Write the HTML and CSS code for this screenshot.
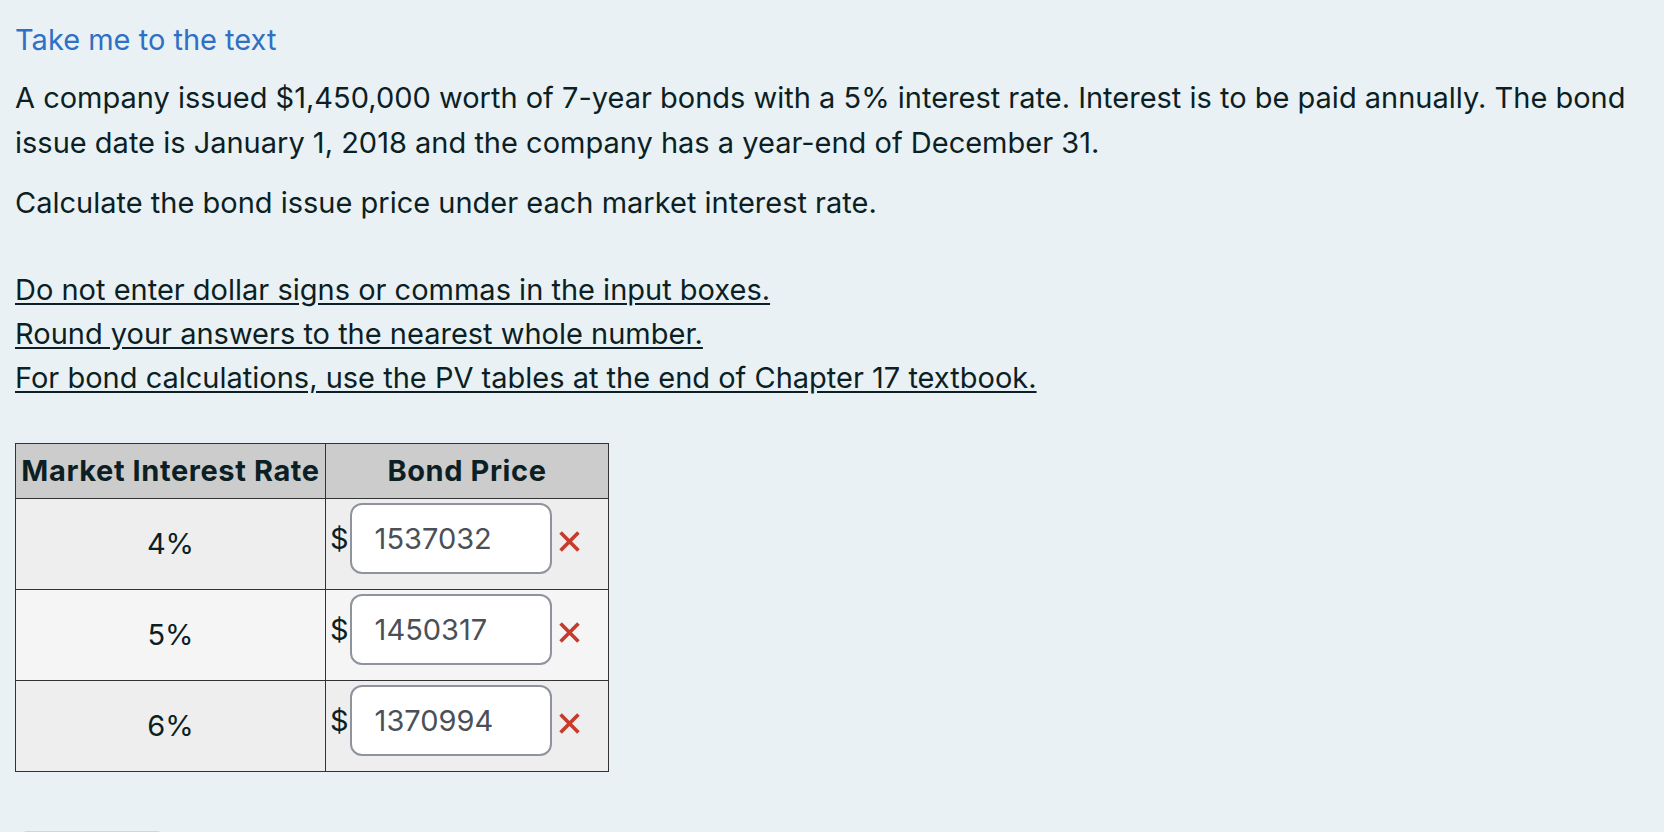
FILE: index.html
```html
<!DOCTYPE html>
<html lang="en">

<head>
    <meta charset="UTF-8">
    <meta name="viewport" content="width=device-width, initial-scale=1.0">
    <title>Bond issue price</title>
    <link rel="stylesheet" href="styles.css">
</head>

<body>
    <main class="question">
        <a href="#text" class="skip-link">Take me to the text</a>

        <p class="intro">A company issued $1,450,000 worth of 7-year bonds with a 5% interest rate. Interest is to be paid annually. The bond issue date is January 1, 2018 and the company has a year-end of December 31.</p>
        <p class="task">Calculate the bond issue price under each market interest rate.</p>

        <div class="notes">
            <u>Do not enter dollar signs or commas in the input boxes.</u><br>
            <u>Round your answers to the nearest whole number.</u><br>
            <u>For bond calculations, use the PV tables at the end of Chapter 17 textbook.</u>
        </div>

        <table class="answers">
            <colgroup>
                <col class="col-rate">
                <col class="col-price">
            </colgroup>
            <thead>
                <tr>
                    <th>Market Interest Rate</th>
                    <th>Bond Price</th>
                </tr>
            </thead>
            <tbody>
                <tr>
                    <td class="rate">4%</td>
                    <td>
                        <div class="answer">
                            <span class="currency">$</span>
                            <input type="text" class="answer-input" value="1537032">
                            <svg class="wrong" viewBox="0 0 20 20" width="21" height="21"><path d="M1.5 1.5 L18.5 18.5 M18.5 1.5 L1.5 18.5" /></svg>
                        </div>
                    </td>
                </tr>
                <tr>
                    <td class="rate">5%</td>
                    <td>
                        <div class="answer">
                            <span class="currency">$</span>
                            <input type="text" class="answer-input" value="1450317">
                            <svg class="wrong" viewBox="0 0 20 20" width="21" height="21"><path d="M1.5 1.5 L18.5 18.5 M18.5 1.5 L1.5 18.5" /></svg>
                        </div>
                    </td>
                </tr>
                <tr>
                    <td class="rate">6%</td>
                    <td>
                        <div class="answer">
                            <span class="currency">$</span>
                            <input type="text" class="answer-input" value="1370994">
                            <svg class="wrong" viewBox="0 0 20 20" width="21" height="21"><path d="M1.5 1.5 L18.5 18.5 M18.5 1.5 L1.5 18.5" /></svg>
                        </div>
                    </td>
                </tr>
            </tbody>
        </table>

        <button class="submit" aria-label="Submit"></button>
    </main>
</body>

</html>
```

FILE: styles.css
```css
body {
    font-family: Inter, "Noto Sans", sans-serif;
    font-size: 29px;
    line-height: 44px;
    color: #0c1f24;
    background-color: #e9f1f4;
    margin: 0;
    padding: 0;
}

.question {
    padding: 18px 15px 0;
}

.skip-link {
    display: block;
    color: #2f6fc4;
    text-decoration: none;
    margin-bottom: 13px;
}

.intro {
    margin: 0 0 16px;
    line-height: 45px;
}

.task {
    margin: 0 0 43px;
}

.notes {
    margin-bottom: 43px;
}

.notes u {
    text-underline-offset: 3px;
}

.answers {
    border-collapse: collapse;
    table-layout: fixed;
    width: 593px;
}

.col-rate {
    width: 310px;
}

.col-price {
    width: 283px;
}

.answers th,
.answers td {
    border: 1px solid #333;
    padding: 0 4px;
}

.answers th {
    background-color: #cccccc;
    height: 54px;
    font-size: 29px;
    font-weight: 700;
    letter-spacing: 0.6px;
    text-align: center;
    white-space: nowrap;
}

.answers td {
    height: 90px;
    vertical-align: middle;
    background-color: #eeeeee;
}

.answers tbody tr:nth-child(even) td {
    background-color: #f5f5f5;
}

.answers .rate {
    text-align: center;
}

.answer {
    display: flex;
    align-items: center;
    margin-top: -11px;
}

.currency {
    margin-right: 1px;
}

.answer-input {
    box-sizing: border-box;
    width: 202px;
    height: 71px;
    border: 2px solid #8f949c;
    border-radius: 12px;
    background: #fff;
    padding: 0 0 0 23px;
    font-family: inherit;
    font-size: 29px;
    color: #4b5057;
}

.wrong {
    margin-left: 7px;
    margin-top: 6px;
}

.wrong path {
    stroke: #c63b2c;
    stroke-width: 3.5;
    fill: none;
}

.submit {
    display: block;
    margin: 59px 0 0 2px;
    width: 150px;
    height: 44px;
    border: none;
    border-radius: 10px;
    background-color: #cfd7db;
}
```
